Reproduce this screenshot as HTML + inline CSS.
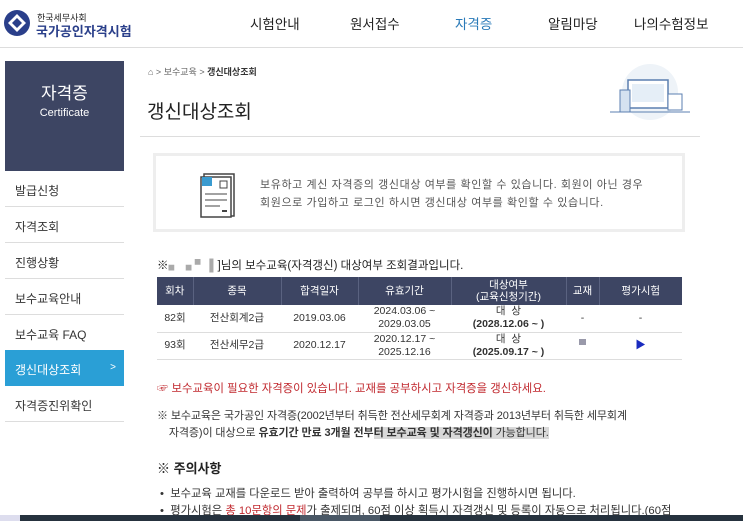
<!DOCTYPE html>
<html><head><meta charset="utf-8"><style>
*{margin:0;padding:0;box-sizing:border-box}
body{width:743px;height:521px;overflow:hidden;background:#fff;font-family:"Liberation Sans","Noto Sans CJK KR",sans-serif;color:#333;position:relative}
.a{position:absolute;white-space:nowrap}
.nav{top:13px;font-size:13.5px;color:#222}
.menu{left:5px;width:119px;height:36px;border-bottom:1px solid #ddd;font-size:12px;padding:11px 0 0 10px;color:#333}
table{border-collapse:collapse;position:absolute;left:157px;top:277px;width:525px;font-size:10.5px;text-align:center}
th{background:#3d4563;color:#fff;font-weight:normal;height:28px;border-right:1px solid #5a6280;line-height:12px}
th:last-child{border-right:none}
td{height:27px;border-bottom:1px solid #ddd;line-height:13px;color:#333}
</style></head><body>
<svg class="a" style="left:3px;top:9px" width="28" height="28" viewBox="0 0 28 28"><circle cx="14" cy="14" r="13" fill="#2a3f8a"/><path d="M14 5 L23 14 L14 23 L5 14Z" fill="#fff"/><path d="M14 9 L19 14 L14 19 L9 14Z" fill="#2a3f8a"/></svg>
<div class="a" style="left:37px;top:11px;font-size:9px;color:#222">한국세무사회</div>
<div class="a" style="left:36px;top:21px;font-size:13px;font-weight:bold;color:#2a3f8a">국가공인자격시험</div>
<div class="a nav" style="left:250px">시험안내</div>
<div class="a nav" style="left:350px">원서접수</div>
<div class="a nav" style="left:455px;color:#2a7ab8">자격증</div>
<div class="a nav" style="left:548px">알림마당</div>
<div class="a nav" style="left:634px">나의수험정보</div>
<div class="a" style="left:0;top:47px;width:743px;height:1px;background:#ddd"></div>
<div class="a" style="left:5px;top:61px;width:119px;height:110px;background:#3d4563;color:#fff;text-align:center;padding-top:18px"><div style="font-size:17px">자격증</div><div style="font-size:11px;margin-top:3px">Certificate</div></div>
<div class="a menu" style="top:171px">발급신청</div>
<div class="a menu" style="top:207px">자격조회</div>
<div class="a menu" style="top:243px">진행상황</div>
<div class="a menu" style="top:279px">보수교육안내</div>
<div class="a menu" style="top:315px">보수교육 FAQ</div>
<div class="a menu" style="top:350px;background:#2a9fd6;color:#fff;border:none">갱신대상조회<span style="position:absolute;right:8px;top:12px;font-size:10px">&gt;</span></div>
<div class="a menu" style="top:386px">자격증진위확인</div>
<div class="a" style="left:148px;top:65px;font-size:9px;color:#666">⌂ &gt; 보수교육 &gt; <b style="color:#333">갱신대상조회</b></div>
<div class="a" style="left:147px;top:97px;font-size:19px;color:#222">갱신대상조회</div>
<svg class="a" style="left:600px;top:62px" width="100" height="62" viewBox="0 0 100 62"><circle cx="50" cy="30" r="28" fill="#eef3f8"/><rect x="28" y="18" width="40" height="28" fill="#fff" stroke="#5b7fb0" stroke-width="1.5"/><rect x="32" y="22" width="32" height="18" fill="#e5eef7"/><rect x="20" y="28" width="10" height="22" fill="#d5e2f0" stroke="#5b7fb0"/><rect x="68" y="32" width="14" height="16" fill="#fff" stroke="#5b7fb0"/><line x1="10" y1="50" x2="90" y2="50" stroke="#5b7fb0"/></svg>
<div class="a" style="left:140px;top:136px;width:560px;height:1px;background:#ddd"></div>
<div class="a" style="left:153px;top:153px;width:532px;height:79px;border:3px solid #eee;background:#fff"></div>
<svg class="a" style="left:200px;top:172px" width="36" height="46" viewBox="0 0 36 46"><rect x="4" y="2" width="30" height="42" fill="#fff" stroke="#444" stroke-width="1.5"/><rect x="1" y="5" width="30" height="40" fill="#fff" stroke="#444" stroke-width="1.5"/><rect x="2" y="5" width="10" height="9" fill="#3a9bd0"/><rect x="20" y="9" width="7" height="7" fill="none" stroke="#444"/><line x1="5" y1="22" x2="27" y2="22" stroke="#444"/><line x1="5" y1="28" x2="27" y2="28" stroke="#444"/><line x1="5" y1="34" x2="20" y2="34" stroke="#444"/><line x1="22" y1="39" x2="27" y2="39" stroke="#444" stroke-width="2"/></svg>
<div class="a" style="left:260px;top:176px;font-size:11px;letter-spacing:0.6px;color:#555;line-height:18px">보유하고 계신 자격증의 갱신대상 여부를 확인할 수 있습니다. 회원이 아닌 경우<br>회원으로 가입하고 로그인 하시면 갱신대상 여부를 확인할 수 있습니다.</div>
<div class="a" style="left:157px;top:257px;font-size:11.5px;color:#222">※<span style="color:#aaa">▖▗ ▘ ▌</span>]님의 보수교육(자격갱신) 대상여부 조회결과입니다.</div>
<table>
<tr><th style="width:36px">회차</th><th style="width:88px">종목</th><th style="width:77px">합격일자</th><th style="width:93px">유효기간</th><th style="width:115px">대상여부<br>(교육신청기간)</th><th style="width:33px">교재</th><th>평가시험</th></tr>
<tr><td>82회</td><td>전산회계2급</td><td>2019.03.06</td><td>2024.03.06 ~<br>2029.03.05</td><td>대 &nbsp;상<br><b>(2028.12.06 ~ )</b></td><td>-</td><td>-</td></tr>
<tr><td>93회</td><td>전산세무2급</td><td>2020.12.17</td><td>2020.12.17 ~<br>2025.12.16</td><td>대 &nbsp;상<br><b>(2025.09.17 ~ )</b></td><td><span style="display:inline-block;width:7px;height:6px;background:#99a">&nbsp;</span></td><td style="color:#1a2bbf">▶</td></tr>
</table>
<div class="a" style="left:157px;top:380px;font-size:11.4px;color:#c0282e">☞ 보수교육이 필요한 자격증이 있습니다. 교재를 공부하시고 자격증을 갱신하세요.</div>
<div class="a" style="left:157px;top:408px;font-size:11px;letter-spacing:-0.1px;color:#333;line-height:17px">※ 보수교육은 국가공인 자격증(2002년부터 취득한 전산세무회계 자격증과 2013년부터 취득한 세무회계<br>&nbsp;&nbsp;&nbsp;&nbsp;자격증)이 대상으로 <b>유효기간 만료 3개월 전부</b><span style="background:#d8d8d8"><b>터 보수교육 및 자격갱신이</b> 가능합니다.</span></div>
<div class="a" style="left:157px;top:458px;font-size:13px;font-weight:bold;color:#222">※ 주의사항</div>
<div class="a" style="left:160px;top:485px;font-size:11.3px;color:#333">• &nbsp;보수교육 교재를 다운로드 받아 출력하여 공부를 하시고 평가시험을 진행하시면 됩니다.</div>
<div class="a" style="left:160px;top:502px;font-size:11.3px;color:#333">• &nbsp;평가시험은 <u style="color:#c0282e">총 10문항의 문제</u>가 출제되며, 60점 이상 획득시 자격갱신 및 등록이 자동으로 처리됩니다.(60점</div>
<div class="a" style="left:0;top:515px;width:743px;height:6px;background:#26323e"></div>
<div class="a" style="left:0;top:515px;width:20px;height:6px;background:#dde"></div>
<div class="a" style="left:300px;top:515px;width:80px;height:6px;background:#4a5866"></div>
</body></html>
